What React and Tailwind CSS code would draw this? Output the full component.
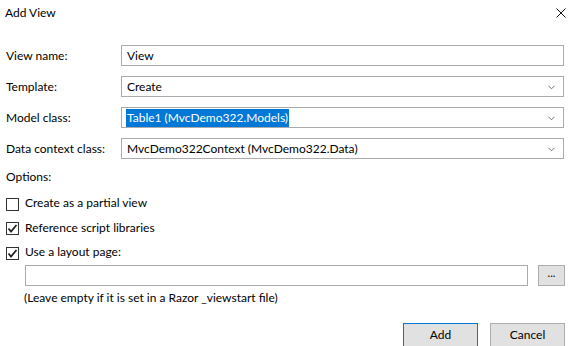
import React from "react";

function Field({ label, value, select, selected }) {
  return (
    <div className="flex h-[21px] items-center">
      <div className="w-[121px] pl-[6px]">{label}</div>
      <div className="relative flex h-[21px] w-[443px] items-center border border-[#ababab] bg-white pl-[4px]">
        {selected ? (
          <span className="bg-[#0078d7] px-[1px] leading-[18px] text-white">{value}</span>
        ) : (
          <span className="pl-[1px]">{value}</span>
        )}
        {select && (
          <svg
            className="absolute right-[8px] top-[8px]"
            width="7"
            height="5"
            viewBox="0 0 7 5"
          >
            <path d="M0.5 0.8 L3.5 3.8 L6.5 0.8" fill="none" stroke="#707070" strokeWidth="1" />
          </svg>
        )}
      </div>
    </div>
  );
}

function Check({ label, checked }) {
  return (
    <div className="flex h-[24.5px] items-center pl-[6px]">
      <div className="mt-[2px] flex h-[13px] w-[13px] items-center justify-center border border-[#333333] bg-white">
        {checked && (
          <svg width="11" height="11" viewBox="0 0 11 11">
            <path d="M1.5 5.5 L4 8.5 L9.5 2" fill="none" stroke="#222222" strokeWidth="1.8" />
          </svg>
        )}
      </div>
      <span className="ml-[6px]">{label}</span>
    </div>
  );
}

export default function App() {
  return (
    <div
      className="h-[346px] w-[569px] overflow-hidden bg-white text-[12px] text-black"
      style={{ fontFamily: '"Segoe UI", Lato, "Liberation Sans", Arial, sans-serif' }}
    >
      <div className="flex h-[26px] items-center justify-between pl-[5px] pr-[3px]">
        <span>Add View</span>
        <svg width="10" height="10" viewBox="0 0 10 10">
          <path d="M0.5 0.5 L9.5 9.5 M9.5 0.5 L0.5 9.5" stroke="#111111" strokeWidth="1" />
        </svg>
      </div>

      <div className="mt-[19px] flex flex-col gap-[10px]">
        <Field label="View name:" value="View" />
        <Field label="Template:" value="Create" select />
        <Field label="Model class:" value="Table1 (MvcDemo322.Models)" select selected />
        <Field label="Data context class:" value="MvcDemo322Context (MvcDemo322.Data)" select />
      </div>

      <div className="mt-[10px] flex h-[16px] items-center pl-[6px]">Options:</div>

      <div className="mt-[6px] flex flex-col">
        <Check label="Create as a partial view" />
        <Check label="Reference script libraries" checked />
        <Check label="Use a layout page:" checked />
      </div>

      <div className="flex items-center pl-[25px]">
        <div className="h-[21px] w-[503px] border border-[#ababab] bg-white" />
        <div className="ml-[10px] flex h-[21px] w-[27px] items-center justify-center border border-[#adadad] bg-[#e1e1e1] pb-[4px] text-[11px]">
          ...
        </div>
      </div>

      <div className="mt-[4px] h-[16px] pl-[24px] leading-[16px]">
        (Leave empty if it is set in a Razor _viewstart file)
      </div>

      <div className="mt-[17px] flex justify-end gap-[12px] pr-[4px]">
        <div className="flex h-[26px] w-[75px] items-center justify-center border border-[#0078d7] bg-[#e1e1e1] pb-[2px]">
          Add
        </div>
        <div className="flex h-[26px] w-[75px] items-center justify-center border border-[#adadad] bg-[#e1e1e1] pb-[2px]">
          Cancel
        </div>
      </div>
    </div>
  );
}
